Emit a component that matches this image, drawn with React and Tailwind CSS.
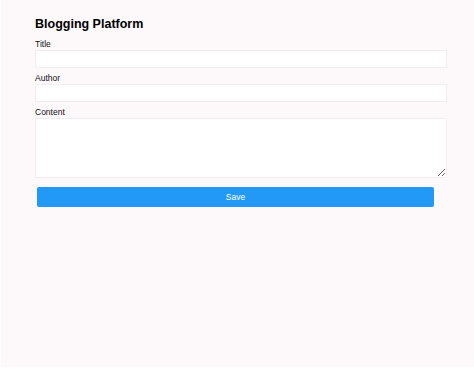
import React, { useState } from 'react';

export default function App() {
    const [title, setTitle] = useState('');
    const [author, setAuthor] = useState('');
    const [content, setContent] = useState('');

    return (
        <div className="h-[370px] w-[474px] bg-white font-['Liberation_Sans',Arial,sans-serif]">
            <div className="ml-[1px] h-[367px] bg-[#fdf8fa] pl-[34px] pt-[17px]">
                <h1 className="text-[12.5px] leading-[15px] font-bold text-black">Blogging Platform</h1>

                {/* form */}
                <div className="mt-[7px] flex flex-col">
                    <label className="text-[8.5px] leading-[10px] text-[#111]">Title</label>
                    <input
                        value={title}
                        onChange={e => setTitle(e.target.value)}
                        className="mt-[1px] h-[18px] w-[412px] border border-[#f3edf0] bg-white px-1 text-[8px] outline-none"
                    />

                    <label className="mt-[5px] text-[8.5px] leading-[10px] text-[#111]">Author</label>
                    <input
                        value={author}
                        onChange={e => setAuthor(e.target.value)}
                        className="mt-[1px] h-[18px] w-[412px] border border-[#f3edf0] bg-white px-1 text-[8px] outline-none"
                    />

                    <label className="mt-[5px] text-[8.5px] leading-[10px] text-[#111]">Content</label>
                    <textarea
                        value={content}
                        onChange={e => setContent(e.target.value)}
                        className="mt-[1px] h-[60px] w-[412px] border border-[#f3edf0] bg-white px-1 text-[8px] outline-none"
                    />

                    <button
                        onClick={() => {}}
                        className="ml-[2px] mt-[9px] h-[20px] w-[397px] rounded-[2px] bg-[#2299f7] text-[8.5px] text-white"
                    >
                        Save
                    </button>
                </div>
            </div>
        </div>
    );
}
